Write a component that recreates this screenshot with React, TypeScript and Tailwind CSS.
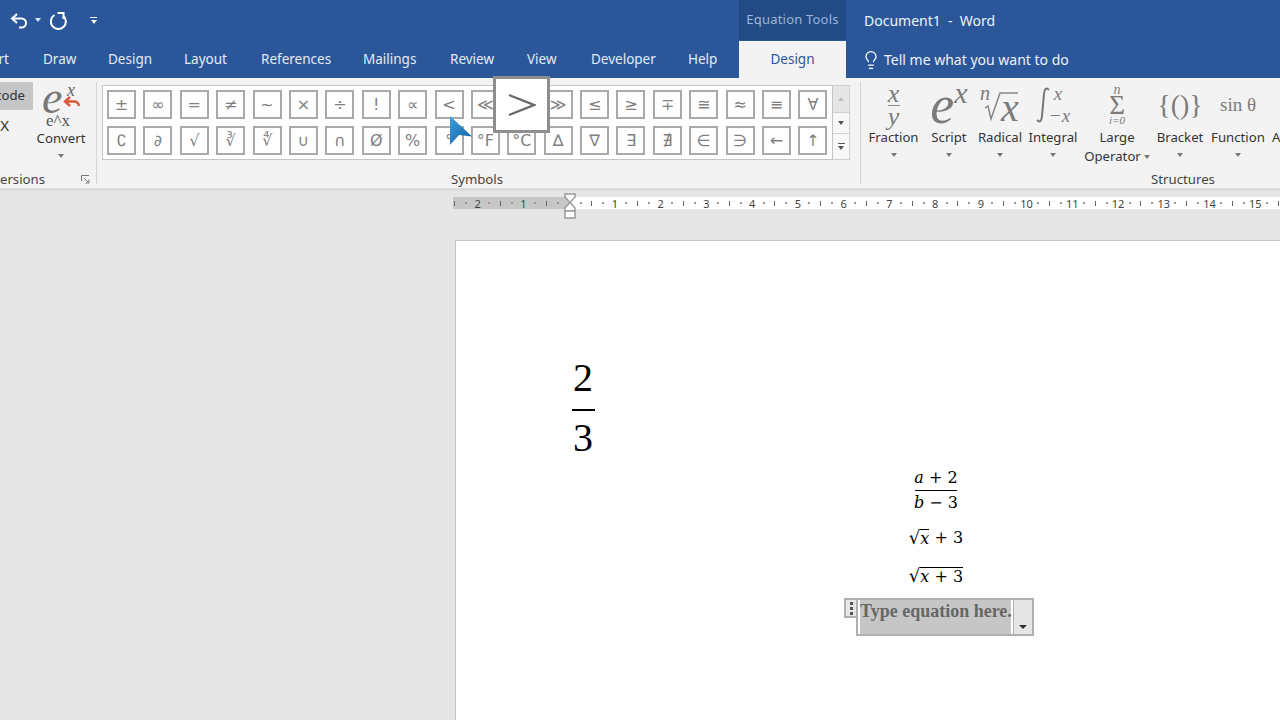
import React from 'react';
import { Lightbulb } from 'lucide-react';

const topSymbols = ['±', '∞', '=', '≠', '~', '×', '÷', '!', '∝', '<', '≪', '>', '≫', '≤', '≥', '∓', '≅', '≈', '≡', '∀'];
const bottomSymbols = ['∁', '∂', '√', '∛', '∜', '∪', '∩', 'Ø', '%', '°', '°F', '°C', '∆', '∇', '∃', '∄', '∈', '∋', '←', '↑'];

const Caret = ({ className = '' }: { className?: string }) => (
  <span className={`inline-block w-0 h-0 border-x-[3.5px] border-x-transparent border-t-[4px] border-t-[#777] ${className}`}></span>
);

const Tile = ({ s }: { s: string }) => (
  <div className="w-[29px] h-[29px] border-2 border-[#a9a9a9] flex items-center justify-center text-[#808080] text-[16px] leading-none font-['DejaVu_Sans',sans-serif] whitespace-nowrap overflow-hidden">
    {s}
  </div>
);

// one ruler mark per quarter inch, numbers on whole inches
const rulerMarks = Array.from({ length: 74 }, (_, i) => i - 10);

const RulerMark = ({ q }: { q: number }) => {
  let mark: React.ReactNode = <span className="w-[2px] h-[2px] bg-[#999]"></span>;
  if (q === 0) mark = null;
  else if (q % 4 === 0) mark = <span>{Math.abs(q / 4)}</span>;
  else if (Math.abs(q) % 4 === 2) mark = <span className="w-[1px] h-[5px] bg-[#666]"></span>;
  return <div className="w-[11.45px] shrink-0 flex items-center justify-center">{mark}</div>;
};

const StructureButton = ({ w, label, children, label2 }: { w: string; label: string; children: React.ReactNode; label2?: boolean }) => (
  <div className={`${w} shrink-0 flex flex-col items-center`}>
    <div className="h-[48px] w-full flex items-center justify-center text-[#7b7b7b] font-['Liberation_Serif',serif] whitespace-nowrap">
      {children}
    </div>
    <div className="h-[19px] -mt-[1px] leading-[19px] whitespace-nowrap">{label}</div>
    {label2 ? (
      <div className="h-[19px] leading-[19px] whitespace-nowrap flex items-center gap-[3px]">Operator<Caret /></div>
    ) : (
      <div className="h-[15px] flex items-center"><Caret /></div>
    )}
  </div>
);

const App: React.FC = () => {
  return (
    <div className="w-[1280px] h-[720px] relative overflow-hidden bg-[#e6e6e6] flex flex-col font-['Noto_Sans',sans-serif] text-[13.2px] text-[#444]">
      {/* Title bar */}
      <div className="h-[40px] shrink-0 bg-[#2b579a] flex items-center text-white">
        <div className="w-[739px] shrink-0 flex items-center pl-[10px]">
          <svg width="19" height="18" viewBox="0 0 19 18" fill="none" stroke="#fff" strokeWidth="2">
            <path d="M7 3 L2 7.5 L7 12" />
            <path d="M2 7.5 H11.5 A4.5 4.5 0 0 1 11.5 16.5 H9" />
          </svg>
          <Caret className="ml-[6px] !border-t-[#dfe6f2]" />
          <svg className="ml-[9px]" width="18" height="20" viewBox="0 0 18 20" fill="none" stroke="#fff" strokeWidth="2">
            <path d="M4.5 5 A7.5 7.5 0 1 0 13 5.5" />
            <path d="M7.5 3 H13.5 V9" />
          </svg>
          <div className="ml-[22px] flex flex-col items-center gap-[2px]">
            <span className="w-[7px] h-[1px] bg-white"></span>
            <Caret className="!border-t-white" />
          </div>
        </div>
        <div className="w-[107px] h-full shrink-0 bg-[#224a85] flex items-center justify-center text-[#9db5d8] text-[13px] tracking-[0.2px]">Equation Tools</div>
        <div className="ml-[18px] text-[14px] text-[#eef2f8] whitespace-pre">Document1  -  Word</div>
      </div>

      {/* Tabs */}
      <div className="h-[38px] pt-[1px] shrink-0 bg-[#2b579a] flex items-center text-[#e3eaf5] text-[13.5px]">
        <div className="w-[9px] shrink-0 flex justify-end overflow-hidden whitespace-nowrap">Insert</div>
        <div className="ml-[34px] w-[65px] shrink-0">Draw</div>
        <div className="w-[76px] shrink-0">Design</div>
        <div className="w-[77px] shrink-0">Layout</div>
        <div className="w-[102px] shrink-0">References</div>
        <div className="w-[87px] shrink-0">Mailings</div>
        <div className="w-[77px] shrink-0">Review</div>
        <div className="w-[64px] shrink-0">View</div>
        <div className="w-[97px] shrink-0">Developer</div>
        <div className="w-[51px] shrink-0">Help</div>
        <div className="w-[107px] h-full shrink-0 bg-[#f3f3f3] flex items-center justify-center text-[#2b579a]">Design</div>
        <div className="ml-[15px] flex items-center gap-[3px] text-[14px] text-[#eef2f8] whitespace-nowrap">
          <Lightbulb size={20} strokeWidth={1.5} color="#fff" />
          Tell me what you want to do
        </div>
      </div>

      {/* Ribbon */}
      <div className="h-[113px] shrink-0 bg-[#f3f3f3] border-b-[3px] border-[#dcdcdc] flex overflow-hidden">
        {/* Conversions */}
        <div className="w-[96px] shrink-0 flex flex-col">
          <div className="h-[92px] flex">
            <div className="w-[33px] shrink-0 flex flex-col pt-[4px]">
              <div className="h-[28px] bg-[#c6c6c6] flex items-center justify-end pr-[8px] overflow-hidden whitespace-nowrap text-[#333]">Unicode</div>
              <div className="mt-[1px] w-[9px] h-[28px] flex items-center justify-end overflow-hidden whitespace-nowrap text-[15px] text-[#333]">LaTeX</div>
            </div>
            <div className="w-[56px] shrink-0 flex flex-col items-center">
              <div className="relative w-[40px] h-[46px] mt-[5px] font-['Liberation_Serif',serif] text-[#777]">
                <span className="absolute left-[1px] top-[-8px] italic text-[46px] leading-[46px]">e</span>
                <span className="absolute left-[26px] top-[-2px] italic text-[18px] leading-[18px] text-[#666]">x</span>
                <svg className="absolute left-[21px] top-[13px]" width="20" height="14" viewBox="0 0 20 14" fill="none" stroke="#d9593a" strokeWidth="2.4">
                  <path d="M8 1 L3 5.5 L8 10" />
                  <path d="M3 5.5 H12 C15 5.5 16.5 7 17 10" />
                </svg>
                <span className="absolute left-[5px] top-[29px] text-[17px] leading-[17px] whitespace-nowrap text-[#555]">e^x</span>
              </div>
              <div className="leading-[18px] text-[#333]">Convert</div>
              <Caret className="mt-[7px]" />
            </div>
          </div>
          <div className="flex-1 flex items-start justify-between pr-[6px]">
            <div className="w-[45px] flex justify-end overflow-hidden whitespace-nowrap leading-[18px] text-[#444]">Conversions</div>
            <svg className="mt-[5px]" width="9" height="9" viewBox="0 0 9 9" fill="none" stroke="#777">
              <path d="M0.5 6 V0.5 H8" />
              <path d="M3 3 L8 8 M8 4.5 V8 H4.5" />
            </svg>
          </div>
        </div>
        <div className="w-[1px] h-[102px] mt-[4px] shrink-0 bg-[#d6d6d6]"></div>

        {/* Symbols */}
        <div className="w-[763px] shrink-0 flex flex-col">
          <div className="h-[92px] pt-[7px] pl-[5px] flex items-start">
            <div className="w-[731px] h-[75px] bg-white border border-[#c6c6c6] pt-[4px] pl-[4px]">
              <div className="grid grid-cols-[repeat(20,29px)] gap-x-[7.4px] gap-y-[7px]">
                {topSymbols.map((s, i) => <Tile key={`t${i}`} s={s} />)}
                {bottomSymbols.map((s, i) => <Tile key={`b${i}`} s={s} />)}
              </div>
            </div>
            <div className="w-[17px] h-[75px] shrink-0 border-y border-r border-[#d0d0d0] flex flex-col">
              <div className="h-[26px] bg-[#e6e6e6] flex items-center justify-center">
                <span className="w-0 h-0 border-x-[3.5px] border-x-transparent border-b-[4px] border-b-[#bbb]"></span>
              </div>
              <div className="h-[22px] border-y border-[#d0d0d0] flex items-center justify-center bg-[#f8f8f8]"><Caret className="!border-t-[#555]" /></div>
              <div className="flex-1 flex flex-col items-center justify-center gap-[2px] bg-[#f8f8f8]">
                <span className="w-[7px] h-[1px] bg-[#555]"></span>
                <Caret className="!border-t-[#555]" />
              </div>
            </div>
          </div>
          <div className="text-center leading-[18px] text-[#444] pr-[3px]">Symbols</div>
        </div>
        <div className="w-[1px] h-[102px] mt-[4px] shrink-0 bg-[#d6d6d6]"></div>

        {/* Structures */}
        <div className="w-[644px] shrink-0 flex flex-col">
          <div className="h-[92px] pt-[3px] flex text-[#333]">
            <StructureButton w="w-[65px]" label="Fraction">
              <div className="flex flex-col items-center italic text-[26px] leading-[18px]">
                <span>x</span>
                <span className="w-[12px] h-[1px] bg-[#888] my-[2px]"></span>
                <span>y</span>
              </div>
            </StructureButton>
            <StructureButton w="w-[46px]" label="Script">
              <span className="italic text-[54px] leading-[40px]">e</span>
              <span className="italic text-[30px] leading-[24px] mb-[24px]">x</span>
            </StructureButton>
            <StructureButton w="w-[56px]" label="Radical">
              <div className="relative w-[40px] h-[38px]">
                <span className="absolute left-0 top-[-3px] italic text-[20px] leading-[20px]">n</span>
                <svg className="absolute left-0 top-0" width="40" height="38" fill="none" stroke="#888" strokeWidth="1.5" viewBox="0 0 40 38">
                  <path d="M5 22 L8 20 L11 33 L20 7 H38" />
                </svg>
                <span className="absolute left-[21px] top-[6px] italic text-[40px] leading-[32px]">x</span>
              </div>
            </StructureButton>
            <StructureButton w="w-[50px]" label="Integral">
              <svg width="14" height="38" viewBox="0 0 14 38" fill="none" stroke="#777" strokeWidth="2">
                <path d="M13 4 C10 1 8.5 3 8 8 L6 30 C5.5 35 4 37 1 34" />
              </svg>
              <div className="flex flex-col italic leading-[22px] -ml-[1px] text-[19px]">
                <span className="pl-[5px]">x</span>
                <span>−x</span>
              </div>
            </StructureButton>
            <StructureButton w="w-[78px]" label="Large" label2>
              <div className="flex flex-col items-center leading-none">
                <span className="italic text-[14px] leading-[10px]">n</span>
                <span className="text-[27px] leading-[20px]">Σ</span>
                <span className="italic text-[11px] leading-[11px]">i=0</span>
              </div>
            </StructureButton>
            <StructureButton w="w-[48px]" label="Bracket">
              <span className="text-[28px] leading-[40px]">{'{()}'}</span>
            </StructureButton>
            <StructureButton w="w-[68px]" label="Function">
              <span className="text-[19px] leading-[40px]">sin θ</span>
            </StructureButton>
            <div className="pt-[47px] leading-[19px]">Accent</div>
          </div>
          <div className="text-center leading-[18px] text-[#444]">Structures</div>
        </div>
      </div>

      {/* Ruler */}
      <div className="h-[12px] mt-[6px] shrink-0 ml-[453px] overflow-hidden flex items-center text-[11px] leading-none text-[#444] bg-[linear-gradient(to_right,#c6c6c6_117px,#ffffff_117px)]">
        <div className="flex -ml-[4px]">
          {rulerMarks.map((q) => <RulerMark key={q} q={q} />)}
        </div>
      </div>

      {/* Document */}
      <div className="mt-[31px] ml-[455px] flex-1 bg-white border-l border-t border-[#c6c6c6] flex flex-col text-black font-['Liberation_Serif',serif]">
        <div className="ml-[115px] mt-[115px] w-[24px] flex flex-col items-center text-[40px] leading-[44px]">
          <span>2</span>
          <span className="w-[23px] h-[2px] bg-black mt-[9px] mb-[5px]"></span>
          <span>3</span>
        </div>
        <div className="ml-[400px] w-[160px] flex flex-col items-center font-['DejaVu_Serif',serif] text-[16px] leading-[20px]">
          <div className="mt-[8px] flex flex-col items-center whitespace-pre">
            <span><i>a</i> + 2</span>
            <span className="w-[42px] h-[1px] bg-black my-[2px]"></span>
            <span><i>b</i> − 3</span>
          </div>
          <div className="mt-[13px] h-[24px] flex items-center whitespace-pre">
            <span className="text-[18px]">√</span><span className="italic border-t border-black leading-[17px]">x</span><span> + 3</span>
          </div>
          <div className="mt-[14px] h-[24px] flex items-center whitespace-pre">
            <span className="text-[18px]">√</span><span className="border-t border-black leading-[17px]"><i>x</i> + 3</span>
          </div>
        </div>
        <div className="ml-[400px] mt-[10px] w-[178px] h-[38px] border-2 border-[#b0b0b0] bg-white flex relative">
          <div className="w-[151px] ml-[2px] h-[34px] bg-[#c6c6c6] text-[#666] font-bold text-[18px] leading-[22px] whitespace-nowrap">Type equation here.</div>
          <div className="ml-auto w-[19px] bg-[#e6e6e6] border-l border-[#b0b0b0] flex items-end justify-center pb-[5px]">
            <span className="w-0 h-0 border-x-[4px] border-x-transparent border-t-[4px] border-t-[#333]"></span>
          </div>
          {/* move handle */}
          <div className="absolute -left-[14px] -top-[2px] w-[14px] h-[20px] bg-[#e6e6e6] border-2 border-[#b0b0b0] flex flex-col items-center justify-center gap-[2px]">
            <span className="w-[3px] h-[3px] bg-[#555]"></span>
            <span className="w-[3px] h-[3px] bg-[#555]"></span>
            <span className="w-[3px] h-[3px] bg-[#555]"></span>
          </div>
        </div>
      </div>

      {/* Enlarged symbol tooltip */}
      <div className="absolute left-[493px] top-[76px] w-[57px] h-[57px] bg-white border-[3px] border-[#8e8e8e] flex items-center justify-center">
        <svg width="28" height="24" viewBox="0 0 28 24" fill="none" stroke="#666" strokeWidth="2.2">
          <path d="M1 2 L26 12 L1 22" />
        </svg>
      </div>

      {/* Mouse pointer */}
      <svg className="absolute left-[447px] top-[114px]" width="27" height="34" viewBox="0 0 27 34">
        <defs>
          <linearGradient id="ptr" x1="0" y1="0" x2="1" y2="1">
            <stop offset="0%" stopColor="#3aa0e4" />
            <stop offset="100%" stopColor="#125a9c" />
          </linearGradient>
        </defs>
        <path d="M3 2 L25 22.5 L12 21 L3 31 Z" fill="url(#ptr)" />
      </svg>

      {/* First-line and hanging indent markers */}
      <svg className="absolute left-[563px] top-[193px]" width="14" height="26" viewBox="0 0 14 26" fill="#fff" stroke="#9a9a9a" strokeWidth="1.5">
        <path d="M2 1 H12 V4 L7 9.5 L2 4 Z" />
        <path d="M7 9.5 L12 15 V18 H2 V15 Z" />
        <path d="M2 18 H12 V25 H2 Z" />
      </svg>
    </div>
  );
};

export default App;
